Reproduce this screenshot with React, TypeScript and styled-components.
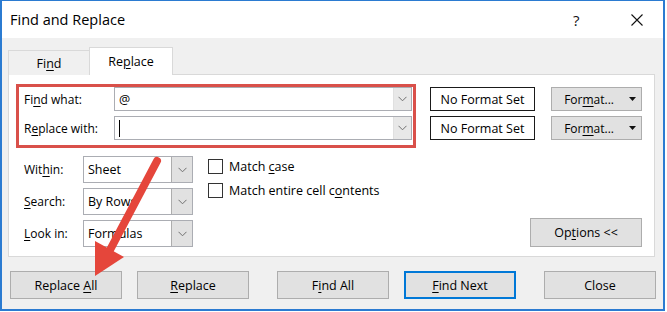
import React from 'react';
import styled, { createGlobalStyle } from 'styled-components';

const Global = createGlobalStyle`
  html, body { margin: 0; padding: 0; background: #ffffff; }
  body { font-family: "Open Sans", "Noto Sans", sans-serif; color: #000; }
  * { box-sizing: border-box; }
  u { text-decoration: underline; text-underline-offset: 2px; text-decoration-thickness: 1px; }
`;

const Root = styled.div`
  position: relative;
  width: 667px;
  height: 312px;
`;

const Window = styled.div`
  width: 665px;
  height: 311px;
  border: 2px solid #2b7bd1;
  border-top-width: 1px;
  background: #f0f0f0;
  display: flex;
  flex-direction: column;
`;

const TitleBar = styled.div`
  height: 37px;
  background: #ffffff;
  display: flex;
  align-items: center;
  padding-left: 8px;
  padding-right: 20px;
`;

const Title = styled.div`
  font-size: 14.5px;
  flex: 1;
`;

const HelpGlyph = styled.div`
  font-size: 15px;
  width: 10px;
  margin-right: 48px;
  color: #111;
`;

const Body = styled.div`
  flex: 1;
  display: flex;
  flex-direction: column;
  padding: 9px 8px 0 6px;
  font-size: 12px;
`;

const Tabs = styled.div`
  display: flex;
  align-items: flex-end;
  height: 28px;
  margin-bottom: -1px;
  position: relative;
  z-index: 1;
`;

const Tab = styled.div<{ $active?: boolean }>`
  display: flex;
  align-items: center;
  justify-content: center;
  width: ${p => (p.$active ? 84 : 81)}px;
  height: ${p => (p.$active ? 28 : 25)}px;
  background: ${p => (p.$active ? '#ffffff' : '#f0f0f0')};
  border: 1px solid #d9d9d9;
  border-bottom: none;
  ${p => (p.$active ? '' : 'border-right: none;')}
  font-size: 12.5px;
  padding-top: ${p => (p.$active ? 0 : 1)}px;
`;

const Panel = styled.div`
  height: 183px;
  background: #ffffff;
  border: 1px solid #d9d9d9;
  padding: 9px 12px 10px 7px;
  display: flex;
  flex-direction: column;
`;

const TopSection = styled.div`
  display: flex;
  align-items: flex-start;
`;

const RedBox = styled.div`
  width: 400px;
  border: 3px solid #d9504a;
  padding: 0 1px 5px 5px;
  display: flex;
  flex-direction: column;
  gap: 5px;
`;

const FieldRow = styled.div`
  display: flex;
  align-items: center;
  height: 24px;
`;

const FieldLabel = styled.div<{ $w: number }>`
  width: ${p => p.$w}px;
  flex: none;
  white-space: nowrap;
`;

const TextInput = styled.div`
  flex: 1;
  height: 24px;
  border: 1px solid #abadb3;
  background: #fff;
  display: flex;
  align-items: stretch;
`;

const InputText = styled.div`
  flex: 1;
  display: flex;
  align-items: center;
  padding-left: 4px;
  font-size: 12.5px;
`;

const Caret = styled.span`
  display: inline-block;
  width: 1px;
  height: 17px;
  background: #000;
`;

const DropArea = styled.div<{ $w: number; $edge?: boolean }>`
  width: ${p => p.$w}px;
  flex: none;
  background: ${p => (p.$edge ? '#e1e1e1' : '#e8e8e8')};
  border-left: 1px solid ${p => (p.$edge ? '#adadad' : '#e0e0e0')};
  display: flex;
  align-items: center;
  justify-content: center;
`;

const FormatCol = styled.div`
  margin-left: 14px;
  padding-top: 3px;
  display: flex;
  flex-direction: column;
  gap: 5px;
`;

const FormatRow = styled.div`
  display: flex;
  gap: 16px;
  height: 24px;
`;

const NoFormatBox = styled.div`
  width: 105px;
  height: 24px;
  border: 1px solid #1a1a1a;
  display: flex;
  align-items: center;
  justify-content: center;
  font-size: 12.5px;
`;

const Button = styled.div<{ $w: number; $h: number; $primary?: boolean; $before?: number }>`
  width: ${p => p.$w}px;
  height: ${p => p.$h}px;
  margin-left: ${p => p.$before ?? 0}px;
  flex: none;
  background: #e1e1e1;
  border: ${p => (p.$primary ? '2px solid #0078d7' : '1px solid #adadad')};
  display: flex;
  align-items: center;
  justify-content: center;
  font-size: 12.5px;
`;

const FormatButton = styled(Button)`
  justify-content: flex-end;
  padding-right: 5px;
  gap: 15px;
  font-size: 12px;
`;

const LowerSection = styled.div`
  margin-top: 8px;
  padding-left: 8px;
  display: flex;
  align-items: flex-start;
  flex: 1;
`;

const OptionGrid = styled.div`
  display: grid;
  grid-template-columns: 59px 110px;
  grid-auto-rows: 27px;
  row-gap: 5px;
  align-items: center;
`;

const Combo = styled.div`
  height: 27px;
  border: 1px solid #abadb3;
  background: #fff;
  display: flex;
`;

const ComboText = styled.div`
  flex: 1;
  display: flex;
  align-items: center;
  padding-left: 4px;
  font-size: 12.5px;
`;

const CheckCol = styled.div`
  margin-left: 15px;
  padding-top: 3px;
  display: flex;
  flex-direction: column;
  gap: 9px;
`;

const CheckRow = styled.div`
  display: flex;
  align-items: center;
  gap: 6px;
  height: 15px;
  font-size: 12.5px;
`;

const CheckBox = styled.div`
  width: 15px;
  height: 15px;
  border: 1px solid #333;
  background: #fff;
`;

const OptionsButton = styled(Button)`
  margin-left: auto;
  align-self: flex-end;
`;

const ButtonRow = styled.div`
  display: flex;
  margin-top: 14px;
  padding-left: 2px;
`;

const Overlay = styled.svg`
  position: absolute;
  left: 0;
  top: 0;
  pointer-events: none;
`;

const Chevron = () => (
  <svg width="9" height="6" viewBox="0 0 9 6">
    <path d="M0.5 0.8 L4.5 4.8 L8.5 0.8" fill="none" stroke="#707070" strokeWidth="1" />
  </svg>
);

const CloseIcon = () => (
  <svg width="12" height="12" viewBox="0 0 12 12">
    <path d="M0.5 0.5 L11.5 11.5 M11.5 0.5 L0.5 11.5" stroke="#111" strokeWidth="1.1" />
  </svg>
);

const DownTriangle = () => (
  <svg width="7" height="4" viewBox="0 0 7 4">
    <path d="M0 0 L7 0 L3.5 4 Z" fill="#111" />
  </svg>
);

export default function App() {
  return (
    <Root>
      <Global />
      <Window>
        <TitleBar>
          <Title>Find and Replace</Title>
          <HelpGlyph>?</HelpGlyph>
          <CloseIcon />
        </TitleBar>
        <Body>
          <Tabs>
            <Tab>
              <span>
                Fi<u>n</u>d
              </span>
            </Tab>
            <Tab $active>
              <span>
                Re<u>p</u>lace
              </span>
            </Tab>
          </Tabs>
          <Panel>
            <TopSection>
              <RedBox>
                <FieldRow>
                  <FieldLabel $w={90}>
                    Fi<u>n</u>d what:
                  </FieldLabel>
                  <TextInput>
                    <InputText>@</InputText>
                    <DropArea $w={18}>
                      <Chevron />
                    </DropArea>
                  </TextInput>
                </FieldRow>
                <FieldRow>
                  <FieldLabel $w={90}>
                    R<u>e</u>place with:
                  </FieldLabel>
                  <TextInput>
                    <InputText>
                      <Caret />
                    </InputText>
                    <DropArea $w={18}>
                      <Chevron />
                    </DropArea>
                  </TextInput>
                </FieldRow>
              </RedBox>
              <FormatCol>
                {[0, 1].map(i => (
                  <FormatRow key={i}>
                    <NoFormatBox>No Format Set</NoFormatBox>
                    <FormatButton $w={91} $h={24}>
                      <span>
                        For<u>m</u>at...
                      </span>
                      <DownTriangle />
                    </FormatButton>
                  </FormatRow>
                ))}
              </FormatCol>
            </TopSection>
            <LowerSection>
              <OptionGrid>
                <FieldLabel $w={59}>
                  Wit<u>h</u>in:
                </FieldLabel>
                <Combo>
                  <ComboText>Sheet</ComboText>
                  <DropArea $w={21} $edge>
                    <Chevron />
                  </DropArea>
                </Combo>
                <FieldLabel $w={59}>
                  <u>S</u>earch:
                </FieldLabel>
                <Combo>
                  <ComboText>By Rows</ComboText>
                  <DropArea $w={21} $edge>
                    <Chevron />
                  </DropArea>
                </Combo>
                <FieldLabel $w={59}>
                  <u>L</u>ook in:
                </FieldLabel>
                <Combo>
                  <ComboText>Formulas</ComboText>
                  <DropArea $w={21} $edge>
                    <Chevron />
                  </DropArea>
                </Combo>
              </OptionGrid>
              <CheckCol>
                <CheckRow>
                  <CheckBox />
                  <span>
                    Match <u>c</u>ase
                  </span>
                </CheckRow>
                <CheckRow>
                  <CheckBox />
                  <span>
                    Match entire cell c<u>o</u>ntents
                  </span>
                </CheckRow>
              </CheckCol>
              <OptionsButton $w={112} $h={29}>
                <span>
                  Op<u>t</u>ions &lt;&lt;
                </span>
              </OptionsButton>
            </LowerSection>
          </Panel>
          <ButtonRow>
            <Button $w={112} $h={28}>
              <span>
                Replace <u>A</u>ll
              </span>
            </Button>
            <Button $w={112} $h={28} $before={15}>
              <span>
                <u>R</u>eplace
              </span>
            </Button>
            <Button $w={112} $h={28} $before={28}>
              <span>
                F<u>i</u>nd All
              </span>
            </Button>
            <Button $w={112} $h={28} $before={15} $primary>
              <span>
                <u>F</u>ind Next
              </span>
            </Button>
            <Button $w={112} $h={28} $before={28}>
              <span>Close</span>
            </Button>
          </ButtonRow>
        </Body>
      </Window>
      <Overlay width="667" height="312" viewBox="0 0 667 312">
        <line x1="157" y1="161" x2="110" y2="250" stroke="#e5463b" strokeWidth="8" strokeLinecap="round" />
        <polygon points="95,276 124,257 95,241" fill="#e5463b" />
      </Overlay>
    </Root>
  );
}
